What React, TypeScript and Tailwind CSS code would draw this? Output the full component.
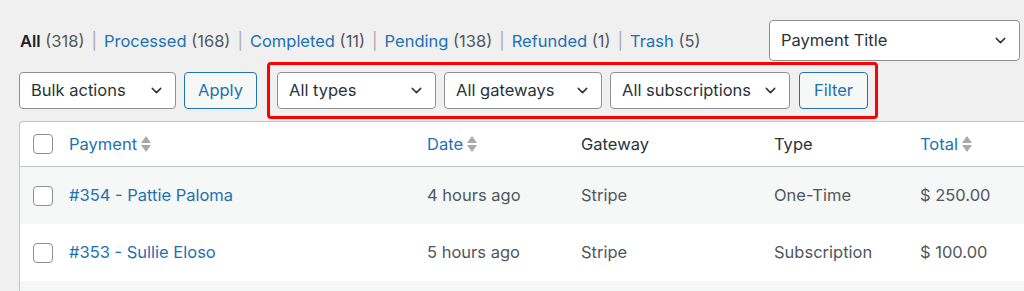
import { ChevronDown } from 'lucide-react'

const font = { fontFamily: 'Inter, "Liberation Sans", sans-serif' }

function Select({ label, width, height = 'h-[37px]' }: { label: string; width: string; height?: string }) {
  return (
    <div
      className={`${width} ${height} flex items-center justify-between pl-[11px] pr-[10px] bg-white border border-[#8c8f94] rounded-[4px] text-[16.5px] text-[#2c3338]`}
    >
      <span>{label}</span>
      <ChevronDown size={17} strokeWidth={2} className="text-[#2c3338]" />
    </div>
  )
}

function Button({ label, width }: { label: string; width: string }) {
  return (
    <div
      className={`${width} h-[37px] flex items-center justify-center bg-[#f6f7f7] border border-[#2271b1] rounded-[4px] text-[16.5px] text-[#2271b1]`}
    >
      {label}
    </div>
  )
}

function SortIcon() {
  return (
    <svg width="10" height="18" viewBox="0 0 10 18" className="ml-[4px]">
      <path d="M5 1 L10 8 L0 8 Z" fill="#a7aaad" />
      <path d="M5 17 L10 10 L0 10 Z" fill="#a7aaad" />
    </svg>
  )
}

function Checkbox() {
  return <div className="w-[20px] h-[20px] rounded-[4px] border border-[#8c8f94] bg-white" />
}

const cols = 'grid grid-cols-[49px_358px_154px_193px_146px_1fr] items-center'

const rows = [
  { id: '#354 - Pattie Paloma', date: '4 hours ago', gateway: 'Stripe', type: 'One-Time', total: '$ 250.00' },
  { id: '#353 - Sullie Eloso', date: '5 hours ago', gateway: 'Stripe', type: 'Subscription', total: '$ 100.00' },
]

export default function App() {
  return (
    <div className="w-[1024px] h-[291px] overflow-hidden bg-[#f0f0f1]" style={font}>
      {/* Status links + search field */}
      <div className="flex items-start pt-[20px] pr-[4px]">
        <div className="flex-1 pl-[20px] pt-[9px] text-[16.5px] text-[#50575e]">
          <span className="font-semibold text-[#1d2327]">All</span> (318)
          {[
            ['Processed', '168'],
            ['Completed', '11'],
            ['Pending', '138'],
            ['Refunded', '1'],
            ['Trash', '5'],
          ].map(([name, n]) => (
            <span key={name}>
              <span className="text-[#a7aaad] px-[7px]">|</span>
              <span className="text-[#2271b1]">{name}</span> ({n})
            </span>
          ))}
        </div>
        <Select label="Payment Title" width="w-[251px]" height="h-[41px]" />
      </div>

      {/* Actions and filters */}
      <div className="flex items-center mt-[1px] pl-[19px]">
        <Select label="Bulk actions" width="w-[157px]" />
        <div className="ml-[8px]">
          <Button label="Apply" width="w-[73px]" />
        </div>
        <div className="ml-[10px] w-[611px] h-[57px] flex items-center gap-[8px] pl-[7px] border-[3px] border-[#ff0000] rounded-[4px]">
          <Select label="All types" width="w-[159px]" />
          <Select label="All gateways" width="w-[158px]" />
          <Select label="All subscriptions" width="w-[180px]" />
          <div className="ml-[1px]">
            <Button label="Filter" width="w-[69px]" />
          </div>
        </div>
      </div>

      {/* Table */}
      <div className="ml-[19px] mt-[2px] w-[1020px] bg-white border-t border-l border-[#c3c4c7] rounded-tl-[4px] text-[16.5px]">
        <div className={`${cols} h-[45px] border-b border-[#c3c4c7]`}>
          <div className="pl-[13px]">
            <Checkbox />
          </div>
          <div className="flex items-center text-[#2271b1]">
            Payment
            <SortIcon />
          </div>
          <div className="flex items-center text-[#2271b1]">
            Date
            <SortIcon />
          </div>
          <div className="text-[#2c3338]">Gateway</div>
          <div className="text-[#2c3338]">Type</div>
          <div className="flex items-center text-[#2271b1]">
            Total
            <SortIcon />
          </div>
        </div>
        {rows.map((r, i) => (
          <div key={r.id} className={`${cols} h-[57px] ${i % 2 === 0 ? 'bg-[#f6f7f7]' : 'bg-white'}`}>
            <div className="pl-[13px]">
              <Checkbox />
            </div>
            <div className="text-[#2271b1]">{r.id}</div>
            <div className="text-[#50575e]">{r.date}</div>
            <div className="text-[#50575e]">{r.gateway}</div>
            <div className="text-[#50575e]">{r.type}</div>
            <div className="text-[#50575e]">{r.total}</div>
          </div>
        ))}
        <div className="h-[20px] bg-[#f6f7f7]" />
      </div>
    </div>
  )
}
